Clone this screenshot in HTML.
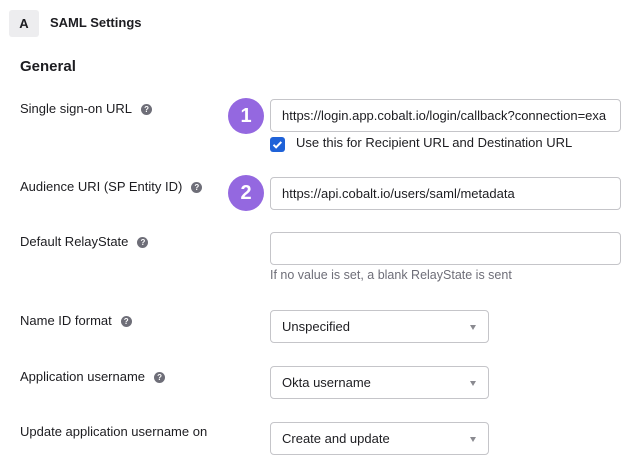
<!DOCTYPE html>
<html><head><style>
body{margin:0;width:644px;height:472px;background:#fff;font-family:"Liberation Sans",sans-serif;color:#1d1d21;position:relative;overflow:hidden}
.a{position:absolute}
.lbl{position:absolute;left:20px;font-size:13px;line-height:16px}
.q{display:inline-block;width:11px;height:11px;border-radius:50%;background:#6e6e78;color:#fff;font-size:8px;font-weight:bold;line-height:11px;text-align:center;vertical-align:1px;margin-left:9px}
.inp{position:absolute;left:270px;height:31px;border:1px solid #c5c5c9;border-radius:4px;font-size:13px;line-height:31px;padding-left:11px;white-space:nowrap;overflow:hidden;width:338px}
.sel{position:absolute;left:270px;width:206px;height:31px;border:1px solid #c5c5c9;border-radius:4px;font-size:13px;line-height:31px;padding-left:11px}
.sel:after{content:"";position:absolute;right:12px;top:14px;border-left:3.5px solid transparent;border-right:3.5px solid transparent;border-top:5px solid #8a8a90}
.c{position:absolute;left:228px;width:36px;height:36px;border-radius:50%;background:#9468e0;color:#fff;font-weight:bold;font-size:20px;text-align:center;line-height:36px}
</style></head><body>
<div class="a" style="left:9px;top:10px;width:30px;height:27px;background:#ededef;border-radius:3px;font-weight:bold;font-size:13px;text-align:center;line-height:27px">A</div>
<div class="a" style="left:50px;top:15px;font-weight:bold;font-size:13px">SAML Settings</div>
<div class="a" style="left:20px;top:58px;font-weight:bold;font-size:15px">General</div>

<div class="lbl" style="top:101px">Single sign-on URL<span class="q">?</span></div>
<div class="c" style="top:98px">1</div>
<div class="inp" style="top:99px">https://login.app.cobalt.io/login/callback?connection=exa</div>
<div class="a" style="left:270px;top:137px;width:15px;height:15px;border-radius:3px;background:#1f62d8"><svg width="15" height="15"><path d="M3.5 7.8l2.6 2.5 5.2-5.4" stroke="#fff" stroke-width="2" fill="none"/></svg></div>
<div class="a" style="left:296px;top:135px;font-size:13px">Use this for Recipient URL and Destination URL</div>

<div class="lbl" style="top:179px">Audience URI (SP Entity ID)<span class="q">?</span></div>
<div class="c" style="top:175px">2</div>
<div class="inp" style="top:177px">https://api.cobalt.io/users/saml/metadata</div>

<div class="lbl" style="top:234px">Default RelayState<span class="q">?</span></div>
<div class="inp" style="top:232px"></div>
<div class="a" style="left:270px;top:268px;font-size:12.5px;color:#6e6e78">If no value is set, a blank RelayState is sent</div>

<div class="lbl" style="top:313px">Name ID format<span class="q">?</span></div>
<div class="sel" style="top:310px">Unspecified</div>
<div class="lbl" style="top:369px">Application username<span class="q">?</span></div>
<div class="sel" style="top:366px">Okta username</div>
<div class="lbl" style="top:424px">Update application username on</div>
<div class="sel" style="top:422px">Create and update</div>
</body></html>
